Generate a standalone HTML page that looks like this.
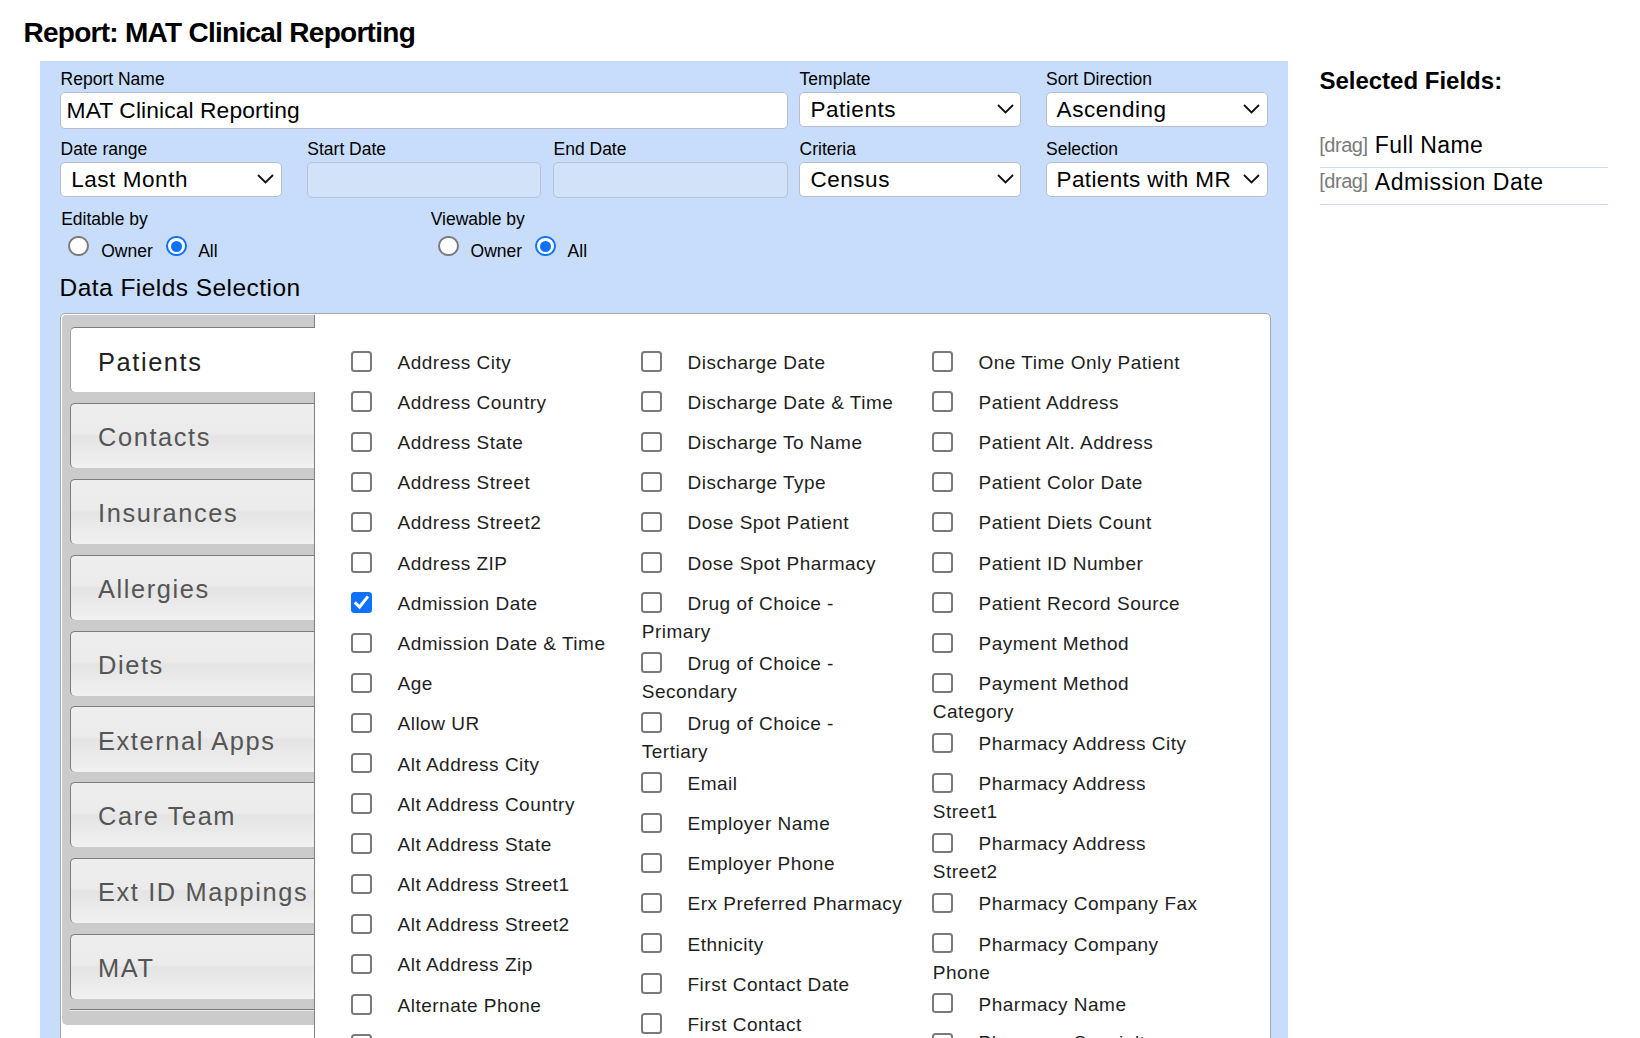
<!DOCTYPE html>
<html><head><meta charset="utf-8"><style>
html,body{margin:0;padding:0;background:#fff;width:1640px;height:1038px;overflow:hidden;position:relative}
.t{position:absolute;white-space:nowrap;line-height:0;font-family:"Liberation Sans", sans-serif}
.r{position:absolute}
svg{position:absolute}
</style></head><body>
<div class="t" style="left:23.4px;top:33.20px;font-size:28px;font-weight:bold;color:#000;letter-spacing:-0.72px;">Report: MAT Clinical Reporting</div>
<div class="r" style="left:40px;top:61px;width:1248px;height:1039px;background:#c8ddfb"></div>
<div class="t" style="left:60.6px;top:78.74px;font-size:17.5px;font-weight:normal;color:#000;letter-spacing:0px;">Report Name</div>
<div class="t" style="left:799.6px;top:78.74px;font-size:17.5px;font-weight:normal;color:#000;letter-spacing:0px;">Template</div>
<div class="t" style="left:1046px;top:78.74px;font-size:17.5px;font-weight:normal;color:#000;letter-spacing:0px;">Sort Direction</div>
<div class="r" style="left:60.2px;top:92.4px;width:727.8px;height:36.19999999999999px;background:#fff;border:1px solid #b9bec6;border-radius:5px;box-sizing:border-box"></div>
<div class="t" style="left:66.6px;top:110.30px;font-size:22.8px;font-weight:normal;color:#000;letter-spacing:0.1px;">MAT Clinical Reporting</div>
<div class="r" style="left:799.4px;top:92.4px;width:221.60000000000002px;height:35.0px;background:#fff;border:1px solid #b9bec6;border-radius:5px;box-sizing:border-box"></div>
<div class="t" style="left:810.4px;top:109.60px;font-size:22.5px;font-weight:normal;color:#000;letter-spacing:0.55px;">Patients</div>
<svg width="17" height="10" viewBox="0 0 17 10" style="position:absolute;left:996.5px;top:104.4px"><path d="M1 1 L8.5 8.5 L16 1" fill="none" stroke="#111" stroke-width="1.8"/></svg>
<div class="r" style="left:1045.6px;top:92.4px;width:222.0px;height:35.0px;background:#fff;border:1px solid #b9bec6;border-radius:5px;box-sizing:border-box"></div>
<div class="t" style="left:1056.6px;top:109.60px;font-size:22.5px;font-weight:normal;color:#000;letter-spacing:0.55px;">Ascending</div>
<svg width="17" height="10" viewBox="0 0 17 10" style="position:absolute;left:1243.1px;top:104.4px"><path d="M1 1 L8.5 8.5 L16 1" fill="none" stroke="#111" stroke-width="1.8"/></svg>
<div class="t" style="left:60.6px;top:148.94px;font-size:17.5px;font-weight:normal;color:#000;letter-spacing:0px;">Date range</div>
<div class="t" style="left:307.3px;top:148.94px;font-size:17.5px;font-weight:normal;color:#000;letter-spacing:0px;">Start Date</div>
<div class="t" style="left:553.5px;top:148.94px;font-size:17.5px;font-weight:normal;color:#000;letter-spacing:0px;">End Date</div>
<div class="t" style="left:799.6px;top:148.94px;font-size:17.5px;font-weight:normal;color:#000;letter-spacing:0px;">Criteria</div>
<div class="t" style="left:1046px;top:148.94px;font-size:17.5px;font-weight:normal;color:#000;letter-spacing:0px;">Selection</div>
<div class="r" style="left:60.2px;top:162.4px;width:221.40000000000003px;height:35.0px;background:#fff;border:1px solid #b9bec6;border-radius:5px;box-sizing:border-box"></div>
<div class="t" style="left:71.2px;top:179.60px;font-size:22.5px;font-weight:normal;color:#000;letter-spacing:0.55px;">Last Month</div>
<svg width="17" height="10" viewBox="0 0 17 10" style="position:absolute;left:257.1px;top:174.4px"><path d="M1 1 L8.5 8.5 L16 1" fill="none" stroke="#111" stroke-width="1.8"/></svg>
<div class="r" style="left:307.2px;top:162.4px;width:233.59999999999997px;height:35.79999999999998px;background:#d2e2f8;border:1px solid #b7c3d1;border-radius:5px;box-sizing:border-box"></div>
<div class="r" style="left:553.2px;top:162.4px;width:234.79999999999995px;height:35.79999999999998px;background:#d2e2f8;border:1px solid #b7c3d1;border-radius:5px;box-sizing:border-box"></div>
<div class="r" style="left:799.4px;top:162.4px;width:221.60000000000002px;height:35.0px;background:#fff;border:1px solid #b9bec6;border-radius:5px;box-sizing:border-box"></div>
<div class="t" style="left:810.4px;top:179.60px;font-size:22.5px;font-weight:normal;color:#000;letter-spacing:0.55px;">Census</div>
<svg width="17" height="10" viewBox="0 0 17 10" style="position:absolute;left:996.5px;top:174.4px"><path d="M1 1 L8.5 8.5 L16 1" fill="none" stroke="#111" stroke-width="1.8"/></svg>
<div class="r" style="left:1045.6px;top:162.4px;width:222.0px;height:35.0px;background:#fff;border:1px solid #b9bec6;border-radius:5px;box-sizing:border-box"></div>
<div class="t" style="left:1056.6px;top:179.60px;font-size:22.5px;font-weight:normal;color:#000;letter-spacing:0.35px;">Patients with MR</div>
<svg width="17" height="10" viewBox="0 0 17 10" style="position:absolute;left:1243.1px;top:174.4px"><path d="M1 1 L8.5 8.5 L16 1" fill="none" stroke="#111" stroke-width="1.8"/></svg>
<div class="t" style="left:61.2px;top:218.94px;font-size:17.5px;font-weight:normal;color:#000;letter-spacing:0px;">Editable by</div>
<div class="t" style="left:430.7px;top:218.94px;font-size:17.5px;font-weight:normal;color:#000;letter-spacing:0px;">Viewable by</div>
<div class="r" style="left:68.3px;top:236.10000000000002px;width:20.4px;height:20.4px;border-radius:50%;background:#fff;border:2px solid #7a7a7a;box-sizing:border-box"></div>
<div class="t" style="left:101.2px;top:250.64px;font-size:17.5px;font-weight:normal;color:#000;letter-spacing:0px;">Owner</div>
<div class="r" style="left:166.3px;top:236.10000000000002px;width:20.4px;height:20.4px;border-radius:50%;background:#fff;border:2px solid #0d71fa;box-sizing:border-box"></div>
<div class="r" style="left:170.9px;top:240.70000000000002px;width:11.2px;height:11.2px;border-radius:50%;background:#0d71fa"></div>
<div class="t" style="left:198.2px;top:250.64px;font-size:17.5px;font-weight:normal;color:#000;letter-spacing:0px;">All</div>
<div class="r" style="left:438.3px;top:236.10000000000002px;width:20.4px;height:20.4px;border-radius:50%;background:#fff;border:2px solid #7a7a7a;box-sizing:border-box"></div>
<div class="t" style="left:470.6px;top:250.64px;font-size:17.5px;font-weight:normal;color:#000;letter-spacing:0px;">Owner</div>
<div class="r" style="left:535.1999999999999px;top:236.10000000000002px;width:20.4px;height:20.4px;border-radius:50%;background:#fff;border:2px solid #0d71fa;box-sizing:border-box"></div>
<div class="r" style="left:539.8px;top:240.70000000000002px;width:11.2px;height:11.2px;border-radius:50%;background:#0d71fa"></div>
<div class="t" style="left:567.6px;top:250.64px;font-size:17.5px;font-weight:normal;color:#000;letter-spacing:0px;">All</div>
<div class="t" style="left:59.6px;top:287.91px;font-size:24.5px;font-weight:normal;color:#000;letter-spacing:0.45px;">Data Fields Selection</div>
<div class="r" style="left:60px;top:313.4px;width:1211px;height:786.6px;background:#fff;border:1px solid #a8a8a8;border-radius:5px;box-sizing:border-box"></div>
<div class="r" style="left:62px;top:315px;width:252px;height:709.5px;background:#cbcbcb;border-radius:4px 0 0 5px"></div>
<div class="r" style="left:313.6px;top:315px;width:1.1999999999999886px;height:785px;background:#808080"></div>
<div class="r" style="left:70.2px;top:327.4px;width:244.60000000000002px;height:64.39999999999998px;background:#fff;border-top:1px solid #7d7d7d;border-left:1px solid #a0a0a0;border-radius:5px 0 0 5px;box-sizing:border-box"></div>
<div class="t" style="left:98px;top:361.60px;font-size:25.4px;font-weight:normal;color:#212121;letter-spacing:1.6px;">Patients</div>
<div class="r" style="left:70.2px;top:403.2px;width:243.8px;height:65.30000000000001px;background:linear-gradient(#eeeeee 0%,#ebebeb 47%,#e4e4e4 50%,#e7e7e7 62%,#f1f1f1 100%);border-top:1px solid #7d7d7d;border-left:1px solid #7d7d7d;border-radius:5px 0 0 5px;box-sizing:border-box"></div>
<div class="t" style="left:98px;top:437.40px;font-size:25.4px;font-weight:normal;color:#555;letter-spacing:1.6px;">Contacts</div>
<div class="r" style="left:70.2px;top:479.0px;width:243.8px;height:65.29999999999995px;background:linear-gradient(#eeeeee 0%,#ebebeb 47%,#e4e4e4 50%,#e7e7e7 62%,#f1f1f1 100%);border-top:1px solid #7d7d7d;border-left:1px solid #7d7d7d;border-radius:5px 0 0 5px;box-sizing:border-box"></div>
<div class="t" style="left:98px;top:513.20px;font-size:25.4px;font-weight:normal;color:#555;letter-spacing:1.6px;">Insurances</div>
<div class="r" style="left:70.2px;top:554.8px;width:243.8px;height:65.29999999999995px;background:linear-gradient(#eeeeee 0%,#ebebeb 47%,#e4e4e4 50%,#e7e7e7 62%,#f1f1f1 100%);border-top:1px solid #7d7d7d;border-left:1px solid #7d7d7d;border-radius:5px 0 0 5px;box-sizing:border-box"></div>
<div class="t" style="left:98px;top:589.00px;font-size:25.4px;font-weight:normal;color:#555;letter-spacing:1.6px;">Allergies</div>
<div class="r" style="left:70.2px;top:630.5999999999999px;width:243.8px;height:65.29999999999995px;background:linear-gradient(#eeeeee 0%,#ebebeb 47%,#e4e4e4 50%,#e7e7e7 62%,#f1f1f1 100%);border-top:1px solid #7d7d7d;border-left:1px solid #7d7d7d;border-radius:5px 0 0 5px;box-sizing:border-box"></div>
<div class="t" style="left:98px;top:664.80px;font-size:25.4px;font-weight:normal;color:#555;letter-spacing:1.6px;">Diets</div>
<div class="r" style="left:70.2px;top:706.4px;width:243.8px;height:65.29999999999995px;background:linear-gradient(#eeeeee 0%,#ebebeb 47%,#e4e4e4 50%,#e7e7e7 62%,#f1f1f1 100%);border-top:1px solid #7d7d7d;border-left:1px solid #7d7d7d;border-radius:5px 0 0 5px;box-sizing:border-box"></div>
<div class="t" style="left:98px;top:740.60px;font-size:25.4px;font-weight:normal;color:#555;letter-spacing:1.6px;">External Apps</div>
<div class="r" style="left:70.2px;top:782.1999999999999px;width:243.8px;height:65.29999999999995px;background:linear-gradient(#eeeeee 0%,#ebebeb 47%,#e4e4e4 50%,#e7e7e7 62%,#f1f1f1 100%);border-top:1px solid #7d7d7d;border-left:1px solid #7d7d7d;border-radius:5px 0 0 5px;box-sizing:border-box"></div>
<div class="t" style="left:98px;top:816.40px;font-size:25.4px;font-weight:normal;color:#555;letter-spacing:1.6px;">Care Team</div>
<div class="r" style="left:70.2px;top:858.0px;width:243.8px;height:65.29999999999995px;background:linear-gradient(#eeeeee 0%,#ebebeb 47%,#e4e4e4 50%,#e7e7e7 62%,#f1f1f1 100%);border-top:1px solid #7d7d7d;border-left:1px solid #7d7d7d;border-radius:5px 0 0 5px;box-sizing:border-box"></div>
<div class="t" style="left:98px;top:892.20px;font-size:25.4px;font-weight:normal;color:#555;letter-spacing:1.6px;">Ext ID Mappings</div>
<div class="r" style="left:70.2px;top:933.8px;width:243.8px;height:65.29999999999995px;background:linear-gradient(#eeeeee 0%,#ebebeb 47%,#e4e4e4 50%,#e7e7e7 62%,#f1f1f1 100%);border-top:1px solid #7d7d7d;border-left:1px solid #7d7d7d;border-radius:5px 0 0 5px;box-sizing:border-box"></div>
<div class="t" style="left:98px;top:968.00px;font-size:25.4px;font-weight:normal;color:#555;letter-spacing:1.6px;">MAT</div>
<div class="r" style="left:70.2px;top:1009.3px;width:243.8px;height:1.2000000000000455px;background:#7d7d7d"></div>
<div class="r" style="left:70.2px;top:1010.2px;width:243.8px;height:1.0px;background:#e8e8e8"></div>
<div class="r" style="left:351.2px;top:351.2px;width:20.5px;height:20.4px;border-radius:3.5px;background:#fff;border:2px solid #7a7a7a;box-sizing:border-box"></div>
<div class="t" style="left:397.5px;top:362.62px;font-size:19px;font-weight:normal;color:#1e1e1e;letter-spacing:0.5px;">Address City</div>
<div class="r" style="left:351.2px;top:391.39px;width:20.5px;height:20.4px;border-radius:3.5px;background:#fff;border:2px solid #7a7a7a;box-sizing:border-box"></div>
<div class="t" style="left:397.5px;top:402.81px;font-size:19px;font-weight:normal;color:#1e1e1e;letter-spacing:0.5px;">Address Country</div>
<div class="r" style="left:351.2px;top:431.58px;width:20.5px;height:20.4px;border-radius:3.5px;background:#fff;border:2px solid #7a7a7a;box-sizing:border-box"></div>
<div class="t" style="left:397.5px;top:443.00px;font-size:19px;font-weight:normal;color:#1e1e1e;letter-spacing:0.5px;">Address State</div>
<div class="r" style="left:351.2px;top:471.77px;width:20.5px;height:20.4px;border-radius:3.5px;background:#fff;border:2px solid #7a7a7a;box-sizing:border-box"></div>
<div class="t" style="left:397.5px;top:483.19px;font-size:19px;font-weight:normal;color:#1e1e1e;letter-spacing:0.5px;">Address Street</div>
<div class="r" style="left:351.2px;top:511.96px;width:20.5px;height:20.4px;border-radius:3.5px;background:#fff;border:2px solid #7a7a7a;box-sizing:border-box"></div>
<div class="t" style="left:397.5px;top:523.38px;font-size:19px;font-weight:normal;color:#1e1e1e;letter-spacing:0.5px;">Address Street2</div>
<div class="r" style="left:351.2px;top:552.15px;width:20.5px;height:20.4px;border-radius:3.5px;background:#fff;border:2px solid #7a7a7a;box-sizing:border-box"></div>
<div class="t" style="left:397.5px;top:563.57px;font-size:19px;font-weight:normal;color:#1e1e1e;letter-spacing:0.5px;">Address ZIP</div>
<div class="r" style="left:351.2px;top:592.3399999999999px;width:20.5px;height:20.4px;border-radius:3.5px;background:#0d71fa"></div>
<svg width="20.5" height="20.4" viewBox="0 0 20 20" style="position:absolute;left:351.2px;top:592.3399999999999px"><path d="M3.6 10.2 L8.3 14.6 L16.6 4.3" fill="none" stroke="#fff" stroke-width="3"/></svg>
<div class="t" style="left:397.5px;top:603.76px;font-size:19px;font-weight:normal;color:#1e1e1e;letter-spacing:0.5px;">Admission Date</div>
<div class="r" style="left:351.2px;top:632.53px;width:20.5px;height:20.4px;border-radius:3.5px;background:#fff;border:2px solid #7a7a7a;box-sizing:border-box"></div>
<div class="t" style="left:397.5px;top:643.95px;font-size:19px;font-weight:normal;color:#1e1e1e;letter-spacing:0.5px;">Admission Date &amp; Time</div>
<div class="r" style="left:351.2px;top:672.72px;width:20.5px;height:20.4px;border-radius:3.5px;background:#fff;border:2px solid #7a7a7a;box-sizing:border-box"></div>
<div class="t" style="left:397.5px;top:684.14px;font-size:19px;font-weight:normal;color:#1e1e1e;letter-spacing:0.5px;">Age</div>
<div class="r" style="left:351.2px;top:712.9100000000001px;width:20.5px;height:20.4px;border-radius:3.5px;background:#fff;border:2px solid #7a7a7a;box-sizing:border-box"></div>
<div class="t" style="left:397.5px;top:724.33px;font-size:19px;font-weight:normal;color:#1e1e1e;letter-spacing:0.5px;">Allow UR</div>
<div class="r" style="left:351.2px;top:753.1000000000001px;width:20.5px;height:20.4px;border-radius:3.5px;background:#fff;border:2px solid #7a7a7a;box-sizing:border-box"></div>
<div class="t" style="left:397.5px;top:764.52px;font-size:19px;font-weight:normal;color:#1e1e1e;letter-spacing:0.5px;">Alt Address City</div>
<div class="r" style="left:351.2px;top:793.2900000000002px;width:20.5px;height:20.4px;border-radius:3.5px;background:#fff;border:2px solid #7a7a7a;box-sizing:border-box"></div>
<div class="t" style="left:397.5px;top:804.71px;font-size:19px;font-weight:normal;color:#1e1e1e;letter-spacing:0.5px;">Alt Address Country</div>
<div class="r" style="left:351.2px;top:833.4800000000002px;width:20.5px;height:20.4px;border-radius:3.5px;background:#fff;border:2px solid #7a7a7a;box-sizing:border-box"></div>
<div class="t" style="left:397.5px;top:844.90px;font-size:19px;font-weight:normal;color:#1e1e1e;letter-spacing:0.5px;">Alt Address State</div>
<div class="r" style="left:351.2px;top:873.6700000000003px;width:20.5px;height:20.4px;border-radius:3.5px;background:#fff;border:2px solid #7a7a7a;box-sizing:border-box"></div>
<div class="t" style="left:397.5px;top:885.09px;font-size:19px;font-weight:normal;color:#1e1e1e;letter-spacing:0.5px;">Alt Address Street1</div>
<div class="r" style="left:351.2px;top:913.8600000000004px;width:20.5px;height:20.4px;border-radius:3.5px;background:#fff;border:2px solid #7a7a7a;box-sizing:border-box"></div>
<div class="t" style="left:397.5px;top:925.28px;font-size:19px;font-weight:normal;color:#1e1e1e;letter-spacing:0.5px;">Alt Address Street2</div>
<div class="r" style="left:351.2px;top:954.0500000000004px;width:20.5px;height:20.4px;border-radius:3.5px;background:#fff;border:2px solid #7a7a7a;box-sizing:border-box"></div>
<div class="t" style="left:397.5px;top:965.47px;font-size:19px;font-weight:normal;color:#1e1e1e;letter-spacing:0.5px;">Alt Address Zip</div>
<div class="r" style="left:351.2px;top:994.2400000000005px;width:20.5px;height:20.4px;border-radius:3.5px;background:#fff;border:2px solid #7a7a7a;box-sizing:border-box"></div>
<div class="t" style="left:397.5px;top:1005.66px;font-size:19px;font-weight:normal;color:#1e1e1e;letter-spacing:0.5px;">Alternate Phone</div>
<div class="r" style="left:351.2px;top:1034.4300000000005px;width:20.5px;height:20.4px;border-radius:3.5px;background:#fff;border:2px solid #7a7a7a;box-sizing:border-box"></div>
<div class="t" style="left:397.5px;top:1045.85px;font-size:19px;font-weight:normal;color:#1e1e1e;letter-spacing:0.5px;">Attending Physician</div>
<div class="r" style="left:641.2px;top:351.2px;width:20.5px;height:20.4px;border-radius:3.5px;background:#fff;border:2px solid #7a7a7a;box-sizing:border-box"></div>
<div class="t" style="left:687.5px;top:362.62px;font-size:19px;font-weight:normal;color:#1e1e1e;letter-spacing:0.5px;">Discharge Date</div>
<div class="r" style="left:641.2px;top:391.39px;width:20.5px;height:20.4px;border-radius:3.5px;background:#fff;border:2px solid #7a7a7a;box-sizing:border-box"></div>
<div class="t" style="left:687.5px;top:402.81px;font-size:19px;font-weight:normal;color:#1e1e1e;letter-spacing:0.5px;">Discharge Date &amp; Time</div>
<div class="r" style="left:641.2px;top:431.58px;width:20.5px;height:20.4px;border-radius:3.5px;background:#fff;border:2px solid #7a7a7a;box-sizing:border-box"></div>
<div class="t" style="left:687.5px;top:443.00px;font-size:19px;font-weight:normal;color:#1e1e1e;letter-spacing:0.5px;">Discharge To Name</div>
<div class="r" style="left:641.2px;top:471.77px;width:20.5px;height:20.4px;border-radius:3.5px;background:#fff;border:2px solid #7a7a7a;box-sizing:border-box"></div>
<div class="t" style="left:687.5px;top:483.19px;font-size:19px;font-weight:normal;color:#1e1e1e;letter-spacing:0.5px;">Discharge Type</div>
<div class="r" style="left:641.2px;top:511.96px;width:20.5px;height:20.4px;border-radius:3.5px;background:#fff;border:2px solid #7a7a7a;box-sizing:border-box"></div>
<div class="t" style="left:687.5px;top:523.38px;font-size:19px;font-weight:normal;color:#1e1e1e;letter-spacing:0.5px;">Dose Spot Patient</div>
<div class="r" style="left:641.2px;top:552.15px;width:20.5px;height:20.4px;border-radius:3.5px;background:#fff;border:2px solid #7a7a7a;box-sizing:border-box"></div>
<div class="t" style="left:687.5px;top:563.57px;font-size:19px;font-weight:normal;color:#1e1e1e;letter-spacing:0.5px;">Dose Spot Pharmacy</div>
<div class="r" style="left:641.2px;top:592.3399999999999px;width:20.5px;height:20.4px;border-radius:3.5px;background:#fff;border:2px solid #7a7a7a;box-sizing:border-box"></div>
<div class="t" style="left:687.5px;top:603.76px;font-size:19px;font-weight:normal;color:#1e1e1e;letter-spacing:0.5px;">Drug of Choice -</div>
<div class="t" style="left:641.8000000000001px;top:631.76px;font-size:19px;font-weight:normal;color:#1e1e1e;letter-spacing:0.5px;">Primary</div>
<div class="r" style="left:641.2px;top:652.3399999999999px;width:20.5px;height:20.4px;border-radius:3.5px;background:#fff;border:2px solid #7a7a7a;box-sizing:border-box"></div>
<div class="t" style="left:687.5px;top:663.76px;font-size:19px;font-weight:normal;color:#1e1e1e;letter-spacing:0.5px;">Drug of Choice -</div>
<div class="t" style="left:641.8000000000001px;top:691.76px;font-size:19px;font-weight:normal;color:#1e1e1e;letter-spacing:0.5px;">Secondary</div>
<div class="r" style="left:641.2px;top:712.3399999999999px;width:20.5px;height:20.4px;border-radius:3.5px;background:#fff;border:2px solid #7a7a7a;box-sizing:border-box"></div>
<div class="t" style="left:687.5px;top:723.76px;font-size:19px;font-weight:normal;color:#1e1e1e;letter-spacing:0.5px;">Drug of Choice -</div>
<div class="t" style="left:641.8000000000001px;top:751.76px;font-size:19px;font-weight:normal;color:#1e1e1e;letter-spacing:0.5px;">Tertiary</div>
<div class="r" style="left:641.2px;top:772.3399999999999px;width:20.5px;height:20.4px;border-radius:3.5px;background:#fff;border:2px solid #7a7a7a;box-sizing:border-box"></div>
<div class="t" style="left:687.5px;top:783.76px;font-size:19px;font-weight:normal;color:#1e1e1e;letter-spacing:0.5px;">Email</div>
<div class="r" style="left:641.2px;top:812.53px;width:20.5px;height:20.4px;border-radius:3.5px;background:#fff;border:2px solid #7a7a7a;box-sizing:border-box"></div>
<div class="t" style="left:687.5px;top:823.95px;font-size:19px;font-weight:normal;color:#1e1e1e;letter-spacing:0.5px;">Employer Name</div>
<div class="r" style="left:641.2px;top:852.72px;width:20.5px;height:20.4px;border-radius:3.5px;background:#fff;border:2px solid #7a7a7a;box-sizing:border-box"></div>
<div class="t" style="left:687.5px;top:864.14px;font-size:19px;font-weight:normal;color:#1e1e1e;letter-spacing:0.5px;">Employer Phone</div>
<div class="r" style="left:641.2px;top:892.9100000000001px;width:20.5px;height:20.4px;border-radius:3.5px;background:#fff;border:2px solid #7a7a7a;box-sizing:border-box"></div>
<div class="t" style="left:687.5px;top:904.33px;font-size:19px;font-weight:normal;color:#1e1e1e;letter-spacing:0.5px;">Erx Preferred Pharmacy</div>
<div class="r" style="left:641.2px;top:933.1000000000001px;width:20.5px;height:20.4px;border-radius:3.5px;background:#fff;border:2px solid #7a7a7a;box-sizing:border-box"></div>
<div class="t" style="left:687.5px;top:944.52px;font-size:19px;font-weight:normal;color:#1e1e1e;letter-spacing:0.5px;">Ethnicity</div>
<div class="r" style="left:641.2px;top:973.2900000000002px;width:20.5px;height:20.4px;border-radius:3.5px;background:#fff;border:2px solid #7a7a7a;box-sizing:border-box"></div>
<div class="t" style="left:687.5px;top:984.71px;font-size:19px;font-weight:normal;color:#1e1e1e;letter-spacing:0.5px;">First Contact Date</div>
<div class="r" style="left:641.2px;top:1013.4800000000002px;width:20.5px;height:20.4px;border-radius:3.5px;background:#fff;border:2px solid #7a7a7a;box-sizing:border-box"></div>
<div class="t" style="left:687.5px;top:1024.90px;font-size:19px;font-weight:normal;color:#1e1e1e;letter-spacing:0.5px;">First Contact</div>
<div class="r" style="left:932.2px;top:351.2px;width:20.5px;height:20.4px;border-radius:3.5px;background:#fff;border:2px solid #7a7a7a;box-sizing:border-box"></div>
<div class="t" style="left:978.5px;top:362.62px;font-size:19px;font-weight:normal;color:#1e1e1e;letter-spacing:0.5px;">One Time Only Patient</div>
<div class="r" style="left:932.2px;top:391.39px;width:20.5px;height:20.4px;border-radius:3.5px;background:#fff;border:2px solid #7a7a7a;box-sizing:border-box"></div>
<div class="t" style="left:978.5px;top:402.81px;font-size:19px;font-weight:normal;color:#1e1e1e;letter-spacing:0.5px;">Patient Address</div>
<div class="r" style="left:932.2px;top:431.58px;width:20.5px;height:20.4px;border-radius:3.5px;background:#fff;border:2px solid #7a7a7a;box-sizing:border-box"></div>
<div class="t" style="left:978.5px;top:443.00px;font-size:19px;font-weight:normal;color:#1e1e1e;letter-spacing:0.5px;">Patient Alt. Address</div>
<div class="r" style="left:932.2px;top:471.77px;width:20.5px;height:20.4px;border-radius:3.5px;background:#fff;border:2px solid #7a7a7a;box-sizing:border-box"></div>
<div class="t" style="left:978.5px;top:483.19px;font-size:19px;font-weight:normal;color:#1e1e1e;letter-spacing:0.5px;">Patient Color Date</div>
<div class="r" style="left:932.2px;top:511.96px;width:20.5px;height:20.4px;border-radius:3.5px;background:#fff;border:2px solid #7a7a7a;box-sizing:border-box"></div>
<div class="t" style="left:978.5px;top:523.38px;font-size:19px;font-weight:normal;color:#1e1e1e;letter-spacing:0.5px;">Patient Diets Count</div>
<div class="r" style="left:932.2px;top:552.15px;width:20.5px;height:20.4px;border-radius:3.5px;background:#fff;border:2px solid #7a7a7a;box-sizing:border-box"></div>
<div class="t" style="left:978.5px;top:563.57px;font-size:19px;font-weight:normal;color:#1e1e1e;letter-spacing:0.5px;">Patient ID Number</div>
<div class="r" style="left:932.2px;top:592.3399999999999px;width:20.5px;height:20.4px;border-radius:3.5px;background:#fff;border:2px solid #7a7a7a;box-sizing:border-box"></div>
<div class="t" style="left:978.5px;top:603.76px;font-size:19px;font-weight:normal;color:#1e1e1e;letter-spacing:0.5px;">Patient Record Source</div>
<div class="r" style="left:932.2px;top:632.53px;width:20.5px;height:20.4px;border-radius:3.5px;background:#fff;border:2px solid #7a7a7a;box-sizing:border-box"></div>
<div class="t" style="left:978.5px;top:643.95px;font-size:19px;font-weight:normal;color:#1e1e1e;letter-spacing:0.5px;">Payment Method</div>
<div class="r" style="left:932.2px;top:672.72px;width:20.5px;height:20.4px;border-radius:3.5px;background:#fff;border:2px solid #7a7a7a;box-sizing:border-box"></div>
<div class="t" style="left:978.5px;top:684.14px;font-size:19px;font-weight:normal;color:#1e1e1e;letter-spacing:0.5px;">Payment Method</div>
<div class="t" style="left:932.8000000000001px;top:712.14px;font-size:19px;font-weight:normal;color:#1e1e1e;letter-spacing:0.5px;">Category</div>
<div class="r" style="left:932.2px;top:732.72px;width:20.5px;height:20.4px;border-radius:3.5px;background:#fff;border:2px solid #7a7a7a;box-sizing:border-box"></div>
<div class="t" style="left:978.5px;top:744.14px;font-size:19px;font-weight:normal;color:#1e1e1e;letter-spacing:0.5px;">Pharmacy Address City</div>
<div class="r" style="left:932.2px;top:772.9100000000001px;width:20.5px;height:20.4px;border-radius:3.5px;background:#fff;border:2px solid #7a7a7a;box-sizing:border-box"></div>
<div class="t" style="left:978.5px;top:784.33px;font-size:19px;font-weight:normal;color:#1e1e1e;letter-spacing:0.5px;">Pharmacy Address</div>
<div class="t" style="left:932.8000000000001px;top:812.33px;font-size:19px;font-weight:normal;color:#1e1e1e;letter-spacing:0.5px;">Street1</div>
<div class="r" style="left:932.2px;top:832.9100000000001px;width:20.5px;height:20.4px;border-radius:3.5px;background:#fff;border:2px solid #7a7a7a;box-sizing:border-box"></div>
<div class="t" style="left:978.5px;top:844.33px;font-size:19px;font-weight:normal;color:#1e1e1e;letter-spacing:0.5px;">Pharmacy Address</div>
<div class="t" style="left:932.8000000000001px;top:872.33px;font-size:19px;font-weight:normal;color:#1e1e1e;letter-spacing:0.5px;">Street2</div>
<div class="r" style="left:932.2px;top:892.9100000000001px;width:20.5px;height:20.4px;border-radius:3.5px;background:#fff;border:2px solid #7a7a7a;box-sizing:border-box"></div>
<div class="t" style="left:978.5px;top:904.33px;font-size:19px;font-weight:normal;color:#1e1e1e;letter-spacing:0.5px;">Pharmacy Company Fax</div>
<div class="r" style="left:932.2px;top:933.1000000000001px;width:20.5px;height:20.4px;border-radius:3.5px;background:#fff;border:2px solid #7a7a7a;box-sizing:border-box"></div>
<div class="t" style="left:978.5px;top:944.52px;font-size:19px;font-weight:normal;color:#1e1e1e;letter-spacing:0.5px;">Pharmacy Company</div>
<div class="t" style="left:932.8000000000001px;top:972.52px;font-size:19px;font-weight:normal;color:#1e1e1e;letter-spacing:0.5px;">Phone</div>
<div class="r" style="left:932.2px;top:993.1000000000001px;width:20.5px;height:20.4px;border-radius:3.5px;background:#fff;border:2px solid #7a7a7a;box-sizing:border-box"></div>
<div class="t" style="left:978.5px;top:1004.52px;font-size:19px;font-weight:normal;color:#1e1e1e;letter-spacing:0.5px;">Pharmacy Name</div>
<div class="r" style="left:932.2px;top:1033.2900000000002px;width:20.5px;height:20.4px;border-radius:3.5px;background:#fff;border:2px solid #7a7a7a;box-sizing:border-box"></div>
<div class="t" style="left:978.5px;top:1043.31px;font-size:19px;font-weight:normal;color:#1e1e1e;letter-spacing:0.5px;">Pharmacy Specialty</div>
<div class="t" style="left:1319.4px;top:81.18px;font-size:24px;font-weight:bold;color:#000;letter-spacing:0px;">Selected Fields:</div>
<div class="t" style="left:1319.2px;top:144.67px;font-size:20px;font-weight:normal;color:#7a7a7a;letter-spacing:-0.45px;">[drag]</div>
<div class="t" style="left:1374.8px;top:145.03px;font-size:23px;font-weight:normal;color:#000;letter-spacing:0.4px;">Full Name</div>
<div class="r" style="left:1320px;top:167.2px;width:288px;height:1.200000000000017px;background:#c9dcf5"></div>
<div class="t" style="left:1319.2px;top:181.17px;font-size:20px;font-weight:normal;color:#7a7a7a;letter-spacing:-0.45px;">[drag]</div>
<div class="t" style="left:1374.8px;top:181.53px;font-size:23px;font-weight:normal;color:#000;letter-spacing:0.55px;">Admission Date</div>
<div class="r" style="left:1320px;top:203.7px;width:288px;height:1.200000000000017px;background:#c9dcf5"></div>
</body></html>
